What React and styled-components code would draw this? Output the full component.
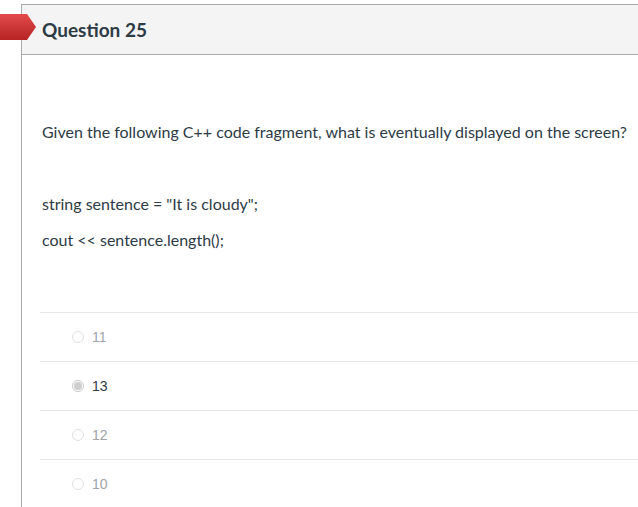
import React from "react";
import styled, { createGlobalStyle } from "styled-components";

const Global = createGlobalStyle`
  html, body { margin: 0; padding: 0; background: #fff; overflow: hidden; }
  body { font-family: Lato, "Noto Sans", sans-serif; }
`;

const Page = styled.div`
  position: relative;
  width: 638px;
  height: 507px;
  padding-top: 4px;
  box-sizing: border-box;
`;

const Flag = styled.div`
  position: absolute;
  left: 0;
  top: 14px;
  width: 36px;
  height: 26px;
  background: linear-gradient(to bottom, #e44a4a, #b52323);
  clip-path: polygon(0 0, 27px 0, 36px 50%, 27px 100%, 0 100%);
`;

const Card = styled.section`
  margin-left: 21px;
  border-left: 1px solid #aaaaaa;
  border-top: 1px solid #aaaaaa;
  height: 503px;
  box-sizing: border-box;
`;

const Header = styled.header`
  height: 49px;
  background: #f4f4f4;
  border-bottom: 1px solid #aaaaaa;
  display: flex;
  align-items: center;
  padding-left: 20px;
`;

const Title = styled.h2`
  margin: 0;
  font-family: Lato, sans-serif;
  font-weight: 700;
  font-size: 19px;
  color: #2d3b45;
`;

const Body = styled.div`
  padding: 0 0 0 20px;
`;

const Text = styled.p`
  margin: 0;
  font-family: Lato, sans-serif;
  font-size: 16px;
  color: #2d3b45;
  line-height: 20px;
`;

const Prompt = styled(Text)`
  padding-top: 67px;
`;

const Code = styled.div`
  padding-top: 52px;
  display: flex;
  flex-direction: column;
  gap: 16px;
`;

const Answers = styled.div`
  margin-top: 62px;
  margin-left: -2px;
`;

const Answer = styled.div`
  height: 48px;
  border-top: 1px solid #e6e6e6;
  display: flex;
  align-items: center;
  padding-left: 32px;
  gap: 8px;
`;

const Radio = styled.span`
  width: 12px;
  height: 12px;
  border-radius: 50%;
  box-sizing: border-box;
  border: 1px solid ${(p) => (p.$checked ? "#c8c8c8" : "#e0e0e0")};
  background: #fff;
  display: flex;
  align-items: center;
  justify-content: center;
  &::after {
    content: "";
    width: 8px;
    height: 8px;
    border-radius: 50%;
    background: ${(p) => (p.$checked ? "#cfcfcf" : "transparent")};
  }
`;

const Label = styled.span`
  font-family: "Liberation Sans", Arial, sans-serif;
  font-size: 14px;
  color: ${(p) => (p.$checked ? "#2d3b45" : "#a0a4a8")};
`;

const answers = [
  { v: "11" },
  { v: "13", checked: true },
  { v: "12" },
  { v: "10" },
];

export default function App() {
  return (
    <Page>
      <Global />
      <Flag />
      <Card>
        <Header>
          <Title>Question 25</Title>
        </Header>
        <Body>
          <Prompt>
            Given the following C++ code fragment, what is eventually displayed on the screen?
          </Prompt>
          <Code>
            <Text>string sentence = "It is cloudy";</Text>
            <Text>cout &lt;&lt; sentence.length();</Text>
          </Code>
          <Answers>
            {answers.map((a) => (
              <Answer key={a.v}>
                <Radio $checked={a.checked} />
                <Label $checked={a.checked}>{a.v}</Label>
              </Answer>
            ))}
          </Answers>
        </Body>
      </Card>
    </Page>
  );
}
